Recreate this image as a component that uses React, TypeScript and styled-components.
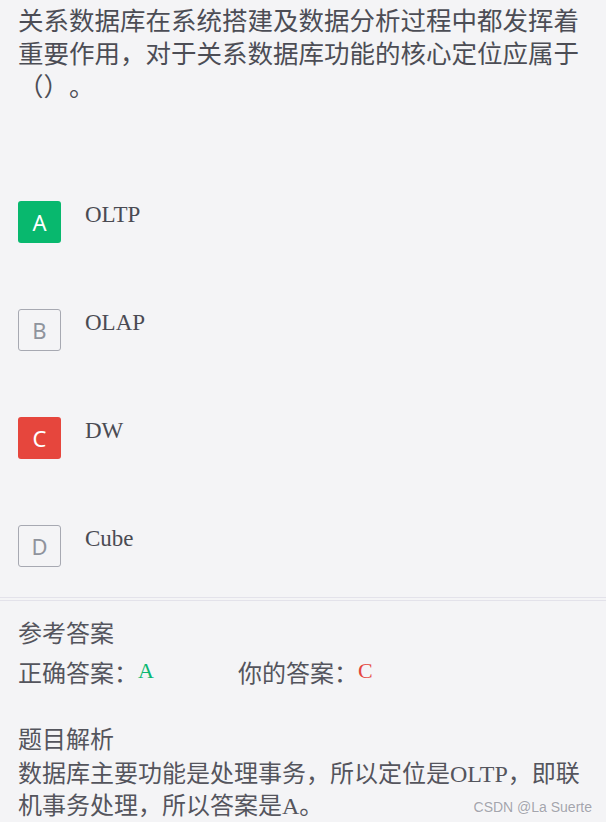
import React from "react";
import styled, { createGlobalStyle } from "styled-components";

const GlobalStyle = createGlobalStyle`
  html, body {
    margin: 0;
    padding: 0;
    background: #f4f4f6;
  }
  * {
    box-sizing: border-box;
  }
`;

const TEXT_FONT = `"Liberation Serif", "Noto Sans CJK SC", serif`;

const Page = styled.div`
  position: relative;
  min-height: 822px;
  background: #f4f4f6;
  color: #4c4d55;
  font-family: ${TEXT_FONT};
  text-spacing-trim: space-all;
`;

const Question = styled.div`
  padding: 5px 16px 0 18px;
  font-size: 25.5px;
  line-height: 33px;
`;

const OptionList = styled.div`
  display: flex;
  flex-direction: column;
  gap: 66px;
  padding: 97px 18px 0;
`;

const OptionRow = styled.div`
  display: flex;
  align-items: flex-start;
  gap: 24px;
`;

type BadgeState = "correct" | "wrong" | "idle";

const Badge = styled.div<{ $state: BadgeState }>`
  width: 43px;
  height: 42px;
  flex: none;
  display: flex;
  align-items: center;
  justify-content: center;
  border-radius: 3px;
  font-family: "Noto Sans", "Open Sans", sans-serif;
  font-size: 22px;
  line-height: 1;
  background: ${({ $state }) =>
    $state === "correct" ? "#08b86e" : $state === "wrong" ? "#e6463d" : "transparent"};
  color: ${({ $state }) => ($state === "idle" ? "#8f939c" : "#ffffff")};
  border: ${({ $state }) => ($state === "idle" ? "1px solid #a7a9b2" : "none")};
`;

const OptionText = styled.div`
  font-size: 23px;
  line-height: 28px;
  color: #4a4b53;
`;

const Divider = styled.div`
  margin-top: 30px;
  height: 4px;
  border-top: 1px solid #e3e2ea;
  border-bottom: 1px solid #e3e2ea;
`;

const AnswerSection = styled.div`
  padding: 15px 16px 0 18px;
`;

const SectionTitle = styled.div<{ $gap?: number }>`
  margin-top: ${({ $gap }) => $gap ?? 0}px;
  font-size: 24px;
  line-height: 36px;
  color: #54555d;
`;

const AnswerRow = styled.div`
  display: flex;
  font-size: 24px;
  line-height: 38px;
  color: #54555d;
`;

const AnswerItem = styled.div<{ $width?: number }>`
  width: ${({ $width }) => ($width ? `${$width}px` : "auto")};
`;

const AnswerLetter = styled.span<{ $color: string }>`
  font-size: 22px;
  vertical-align: 4px;
  color: ${({ $color }) => $color};
`;

const Analysis = styled.div`
  font-size: 24px;
  line-height: 32px;
  color: #54555d;
`;

// CSDN watermark stamped over the bottom right corner
const Watermark = styled.div`
  position: absolute;
  right: 14px;
  bottom: 7px;
  font-family: "Liberation Sans", Arial, sans-serif;
  font-size: 14px;
  line-height: 16px;
  color: #a4a5ad;
  text-shadow: 0 0 2px #ffffff;
`;

const options: { key: string; text: string; state: BadgeState }[] = [
  { key: "A", text: "OLTP", state: "correct" },
  { key: "B", text: "OLAP", state: "idle" },
  { key: "C", text: "DW", state: "wrong" },
  { key: "D", text: "Cube", state: "idle" },
];

const App: React.FC = () => {
  return (
    <Page>
      <GlobalStyle />
      <Question>
        关系数据库在系统搭建及数据分析过程中都发挥着重要作用，对于关系数据库功能的核心定位应属于（）。
      </Question>
      <OptionList>
        {options.map((opt) => (
          <OptionRow key={opt.key}>
            <Badge $state={opt.state}>{opt.key}</Badge>
            <OptionText>{opt.text}</OptionText>
          </OptionRow>
        ))}
      </OptionList>
      <Divider />
      <AnswerSection>
        <SectionTitle>参考答案</SectionTitle>
        <AnswerRow>
          <AnswerItem $width={220}>
            正确答案：<AnswerLetter $color="#0bb872">A</AnswerLetter>
          </AnswerItem>
          <AnswerItem>
            你的答案：<AnswerLetter $color="#e4463e">C</AnswerLetter>
          </AnswerItem>
        </AnswerRow>
        <SectionTitle $gap={29}>题目解析</SectionTitle>
        <Analysis>数据库主要功能是处理事务，所以定位是OLTP，即联机事务处理，所以答案是A。</Analysis>
      </AnswerSection>
      <Watermark>CSDN @La Suerte</Watermark>
    </Page>
  );
};

export default App;
